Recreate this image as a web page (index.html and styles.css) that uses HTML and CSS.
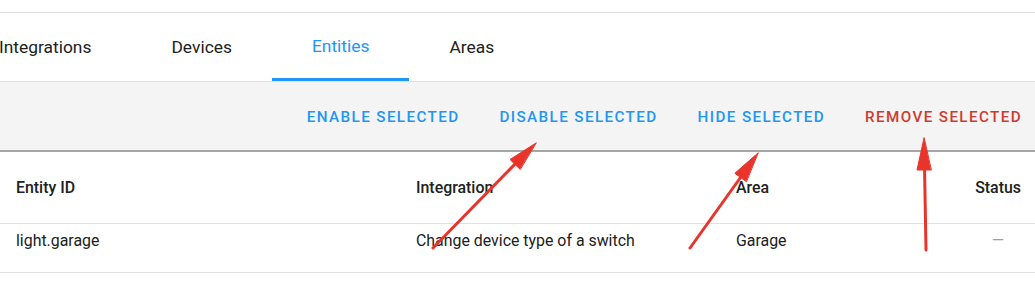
FILE: index.html
```html
<!DOCTYPE html>
<html lang="en">
<head>
  <meta charset="UTF-8" />
  <title>Entities</title>
  <link rel="stylesheet" href="styles.css">
</head>
<body>

  <div class="page">
    <nav class="tabs">
      <div class="tab">Integrations</div>
      <div class="tab">Devices</div>
      <div class="tab active">Entities</div>
      <div class="tab">Areas</div>
    </nav>

    <div class="toolbar">
      <button class="btn">Enable selected</button>
      <button class="btn">Disable selected</button>
      <button class="btn">Hide selected</button>
      <button class="btn danger">Remove selected</button>
    </div>

    <div class="table">
      <div class="row head">
        <div>Entity ID</div>
        <div>Integration</div>
        <div>Area</div>
        <div class="status">Status</div>
      </div>
      <div class="row">
        <div>light.garage</div>
        <div>Change device type of a switch</div>
        <div>Garage</div>
        <div class="status dash">—</div>
      </div>
    </div>

    <!-- annotation arrows drawn over the screenshot -->
    <svg class="arrows" width="1035" height="283" viewBox="0 0 1035 283">
      <g stroke="#e8342a" stroke-width="3" stroke-linecap="round" fill="#e8342a">
        <line x1="433" y1="248" x2="518" y2="161" />
        <polygon points="536,143 510,159.5 520,169.3" stroke-width="1" stroke-linejoin="round" />
        <line x1="690" y1="248" x2="743" y2="174" />
        <polygon points="758,153 734.8,173.3 746.2,181.5" stroke-width="1" stroke-linejoin="round" />
        <line x1="926" y1="250" x2="924.5" y2="166" />
        <polygon points="924,138 917,170 931,170" stroke-width="1" stroke-linejoin="round" />
      </g>
    </svg>
  </div>

</body>
</html>
```

FILE: styles.css
```css
body {
  margin: 0;
  padding: 0;
  font-family: Roboto, "Noto Sans", Arial, sans-serif;
  color: #212121;
  background: white;
  overflow: hidden;
}

.page {
  position: relative;
  width: 1035px;
  height: 283px;
  padding-top: 12px;
  box-sizing: border-box;
}

.tabs {
  display: flex;
  margin-left: -41px;
  border-top: 1px solid #e0e0e0;
  border-bottom: 1px solid #e0e0e0;
}

.tab {
  height: 68px;
  padding: 0 40px;
  display: flex;
  align-items: center;
  font-size: 17.4px;
  box-sizing: border-box;
  border-bottom: 3px solid transparent;
  padding-top: 3px;
}

.tab.active {
  color: #2196f3;
  border-bottom-color: #2196f3;
  padding-top: 0;
  padding-bottom: 0;
}

.toolbar {
  height: 70px;
  box-sizing: border-box;
  background: #f4f4f4;
  border-bottom: 2px solid #a6a6a6;
  display: flex;
  justify-content: flex-end;
  align-items: center;
  gap: 40px;
  padding: 2px 13px 0 0;
}

.btn {
  background: none;
  border: none;
  padding: 0;
  font-family: inherit;
  font-size: 15.2px;
  font-weight: 500;
  letter-spacing: 1.4px;
  text-transform: uppercase;
  color: #2196f3;
  cursor: pointer;
}

.btn.danger {
  color: #cf3a2e;
}

.table {
  font-size: 15.9px;
}

.row {
  display: grid;
  grid-template-columns: 400px 320px 1fr 46px;
  padding: 7px 14px 21px 16px;
  line-height: 20px;
  border-bottom: 1px solid #e0e0e0;
}

.row.head {
  font-weight: 500;
  padding: 26px 14px 25px 16px;
}

.status {
  text-align: center;
  white-space: nowrap;
}

.head .status {
  text-align: right;
}

.dash {
  color: #9e9e9e;
}

.arrows {
  position: absolute;
  left: 0;
  top: 0;
  pointer-events: none;
}
```
